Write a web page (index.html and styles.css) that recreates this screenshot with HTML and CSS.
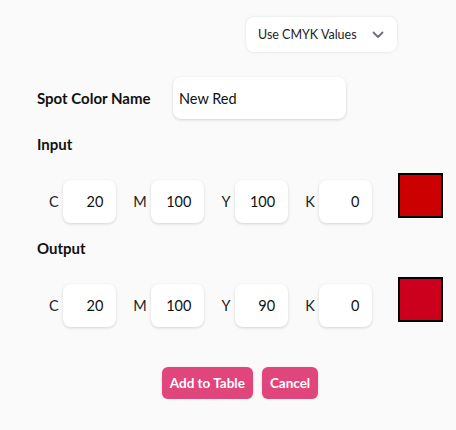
FILE: index.html
```html
<!DOCTYPE html>
<html>
<head>
<meta charset="utf-8">
<link rel="stylesheet" href="styles.css">
</head>
<body>
<div class="page">
  <div class="top">
    <div class="select">
      <span>Use CMYK Values</span>
      <svg class="chev" width="12" height="8" viewBox="0 0 12 8"><path d="M1.5 1.5 L6 6 L10.5 1.5" fill="none" stroke="#6b6f7a" stroke-width="1.8" stroke-linecap="round" stroke-linejoin="round"/></svg>
    </div>
  </div>
  <div class="name-row">
    <span class="label">Spot Color Name</span>
    <div class="field name-field">New Red</div>
  </div>
  <div class="heading">Input</div>
  <div class="cmyk-row">
    <span class="ch">C</span><div class="field num">20</div>
    <span class="ch">M</span><div class="field num">100</div>
    <span class="ch">Y</span><div class="field num">100</div>
    <span class="ch">K</span><div class="field num">0</div>
    <div class="swatch swatch-in"></div>
  </div>
  <div class="heading">Output</div>
  <div class="cmyk-row">
    <span class="ch">C</span><div class="field num">20</div>
    <span class="ch">M</span><div class="field num">100</div>
    <span class="ch">Y</span><div class="field num">90</div>
    <span class="ch">K</span><div class="field num">0</div>
    <div class="swatch swatch-out"></div>
  </div>
  <div class="buttons">
    <button class="btn">Add to Table</button>
    <button class="btn">Cancel</button>
  </div>
</div>
</body>
</html>
```
FILE: styles.css
```css
html, body {
  margin: 0;
  padding: 0;
  background: #fafafa;
}
body {
  font-family: "Lato", "Noto Sans", sans-serif;
  color: #111;
}
.page {
  width: 406px;
  padding: 17px 13px 0 37px;
}
.top {
  display: flex;
  justify-content: flex-end;
  padding-right: 46px;
}
.select {
  width: 151px;
  height: 35px;
  box-sizing: border-box;
  background: #fff;
  border-radius: 8px;
  box-shadow: 0 0 3px rgba(0,0,0,0.12);
  display: flex;
  align-items: center;
  justify-content: space-between;
  padding: 0 13px 0 12px;
  font-size: 12.5px;
  color: #222;
}
.chev { margin-top: 1px; }
.name-row {
  display: flex;
  align-items: center;
  margin-top: 25px;
}
.label {
  font-weight: bold;
  font-size: 15px;
  width: 136px;
}
.field {
  background: #fff;
  border-radius: 8px;
  box-shadow: 0 1px 3px rgba(0,0,0,0.16);
  box-sizing: border-box;
  display: flex;
  align-items: center;
  font-size: 14.5px;
  color: #111;
}
.name-field {
  width: 173px;
  height: 42px;
  padding-left: 6px;
}
.heading {
  font-weight: bold;
  font-size: 15px;
  line-height: 20px;
  margin-top: 15px;
}
.cmyk-row {
  display: flex;
  align-items: flex-start;
  padding-left: 12px;
  margin-top: 19px;
}
.ch {
  align-self: center;
  font-size: 14.5px;
  padding-right: 4px;
  margin-top: 7px;
  color: #222;
}
.num {
  width: 54px;
  height: 43px;
  justify-content: flex-end;
  padding-right: 13px;
  margin-right: 17px;
  margin-top: 7px;
}
.swatch {
  width: 45px;
  height: 45px;
  box-sizing: border-box;
  border: 2px solid #000;
  margin-left: 9px;
}
.swatch-in { background: #cc0000; }
.swatch-out { background: #cc001d; }
.buttons {
  display: flex;
  justify-content: center;
  gap: 9px;
  margin-top: 40px;
}
.btn {
  border: none;
  background: #e0457b;
  color: #fff;
  font-family: inherit;
  font-weight: bold;
  font-size: 13.5px;
  height: 32px;
  padding: 0 8px;
  border-radius: 6px;
  box-shadow: 0 1px 3px rgba(0,0,0,0.15);
}
```
